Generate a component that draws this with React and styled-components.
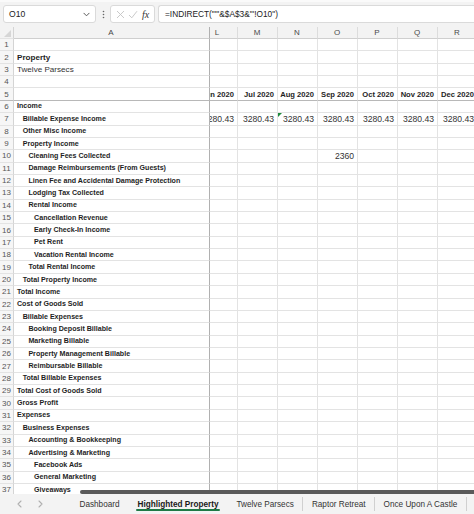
import styled, { createGlobalStyle } from 'styled-components';

const GlobalStyle = createGlobalStyle`
	html, body {
		margin: 0;
		padding: 0;
		overflow: hidden;
		background: #ffffff;
	}
	* {
		box-sizing: border-box;
	}
`;

const ROW_H = 12.36;

const Frame = styled.div`
	width: 474px;
	height: 514px;
	display: flex;
	flex-direction: column;
	font-family: 'Liberation Sans', Arial, sans-serif;
	background: #ffffff;
	overflow: hidden;
`;

const FormulaBar = styled.div`
	height: 26px;
	flex-shrink: 0;
	display: flex;
	align-items: center;
	padding: 0 0 0 3px;
	background: #f3f3f3;
	border-top: 2px solid #fafafa;
`;

const Box = styled.div`
	height: 18px;
	background: #ffffff;
	border: 1px solid #dadada;
	border-radius: 3px;
	display: flex;
	align-items: center;
`;

const NameBox = styled(Box)`
	width: 93px;
	padding: 0 5px 0 5px;
	justify-content: space-between;
	font-size: 8.6px;
	color: #222;
`;

const Dots = styled.div`
	width: 14px;
	display: flex;
	justify-content: center;
	color: #666;
`;

const FuncBox = styled(Box)`
	width: 45px;
	justify-content: space-around;
	padding: 0 3px;
	margin-right: 3px;
`;

const Fx = styled.span`
	font-family: 'Liberation Serif', serif;
	font-style: italic;
	font-size: 10px;
	color: #333;
`;

const FormulaInput = styled(Box)`
	flex: 1;
	border-right: none;
	border-radius: 3px 0 0 3px;
	padding-left: 6px;
	font-size: 8.3px;
	color: #222;
	white-space: pre;
`;

const Gap = styled.div`
	height: 1px;
	background: #f3f3f3;
	flex-shrink: 0;
`;

const Sheet = styled.div`
	flex: 1;
	position: relative;
	overflow: hidden;
`;

const Row = styled.div`
	display: flex;
	height: ${(p) => (p.$head ? '12px' : `${ROW_H}px`)};
	width: 480px;
`;

const RowNum = styled.div`
	width: 14px;
	flex-shrink: 0;
	background: ${(p) => (p.$corner ? '#f3f3f3' : '#f6f6f6')};
	border-bottom: 1px solid ${(p) => (p.$freeze ? '#b8b8b8' : '#e3e3e3')};
	border-right: 1px solid #d4d4d4;
	color: #555;
	font-size: 8px;
	display: flex;
	align-items: center;
	justify-content: center;
	position: relative;
`;

const Corner = styled.div`
	width: 0;
	height: 0;
	border-left: 7px solid transparent;
	border-bottom: 7px solid #d6d6d6;
	position: absolute;
	right: 2px;
	bottom: 1px;
`;

const ColHead = styled.div`
	width: ${(p) => p.$w}px;
	flex-shrink: 0;
	background: #f3f3f3;
	border-right: 1px solid ${(p) => (p.$freeze ? '#b0b0b0' : '#dcdcdc')};
	border-bottom: 1px solid #cfcfcf;
	color: #4a4a4a;
	font-size: 8px;
	display: flex;
	align-items: center;
	justify-content: flex-end;
	overflow: hidden;
`;

const HeadLabel = styled.span`
	width: ${(p) => p.$w}px;
	flex-shrink: 0;
	text-align: center;
`;

const Cell = styled.div`
	width: ${(p) => p.$w}px;
	flex-shrink: 0;
	border-right: ${(p) => (p.$freeze ? '1.5px solid #b0b0b0' : '1px solid #e3e3e3')};
	border-bottom: 1px solid ${(p) => (p.$freeze5 ? '#b8b8b8' : '#e3e3e3')};
	display: flex;
	align-items: center;
	justify-content: ${(p) => (p.$left ? 'flex-start' : 'flex-end')};
	overflow: hidden;
	white-space: nowrap;
	position: relative;
`;

const Label = styled.span`
	padding-left: ${(p) => 3 + p.$level * 5.7}px;
	font-size: ${(p) => (p.$big ? '8.1px' : '7.1px')};
	font-weight: ${(p) => (p.$plain ? 400 : 700)};
	color: ${(p) => (p.$plain ? '#333' : '#1e1e1e')};
`;

const Value = styled.span`
	width: ${(p) => p.$w}px;
	flex-shrink: 0;
	text-align: right;
	padding-right: 3px;
	font-size: ${(p) => (p.$bold ? '7.6px' : '8.6px')};
	font-weight: ${(p) => (p.$bold ? 700 : 400)};
	color: ${(p) => (p.$bold ? '#1e1e1e' : '#333')};
`;

const ErrorMark = styled.div`
	position: absolute;
	left: 0;
	top: 0;
	width: 0;
	height: 0;
	border-top: 4px solid #1e8a3c;
	border-right: 4px solid transparent;
`;

const ScrollThumb = styled.div`
	position: absolute;
	left: 80px;
	right: 0;
	bottom: 0;
	height: 4px;
	background: #5a5a5a;
	border-radius: 2px 0 0 2px;
`;

const TabBar = styled.div`
	height: 20px;
	flex-shrink: 0;
	background: #f3f3f3;
	display: flex;
	align-items: center;
	font-size: 8.2px;
	color: #333;
`;

const Arrow = styled.div`
	width: 20px;
	display: flex;
	justify-content: center;
	color: #b0b0b0;
`;

const Tabs = styled.div`
	display: flex;
	align-items: stretch;
	height: 100%;
	margin-left: 21px;
`;

const Tab = styled.div`
	position: relative;
	display: flex;
	align-items: center;
	padding: 0 8.5px;
	white-space: nowrap;
	font-weight: ${(p) => (p.$active ? 700 : 400)};
	color: ${(p) => (p.$active ? '#1a1a1a' : '#333')};
	border-right: 1px solid ${(p) => (p.$sep ? '#d0d0d0' : 'transparent')};
	margin: 3px 0;

	&::after {
		content: '';
		display: ${(p) => (p.$active ? 'block' : 'none')};
		position: absolute;
		left: 7px;
		right: 7px;
		bottom: 0;
		height: 2px;
		border-radius: 1px;
		background: #1e7a46;
	}
`;

const labels = [
	['', 0],
	['Property', 0, 'big'],
	['Twelve Parsecs', 0, 'plain'],
	['', 0],
	['', 0],
	['Income', 0],
	['Billable Expense Income', 1],
	['Other Misc Income', 1],
	['Property Income', 1],
	['Cleaning Fees Collected', 2],
	['Damage Reimbursements (From Guests)', 2],
	['Linen Fee and Accidental Damage Protection', 2],
	['Lodging Tax Collected', 2],
	['Rental Income', 2],
	['Cancellation Revenue', 3],
	['Early Check-In Income', 3],
	['Pet Rent', 3],
	['Vacation Rental Income', 3],
	['Total Rental Income', 2],
	['Total Property Income', 1],
	['Total Income', 0],
	['Cost of Goods Sold', 0],
	['Billable Expenses', 1],
	['Booking Deposit Billable', 2],
	['Marketing Billable', 2],
	['Property Management Billable', 2],
	['Reimbursable Billable', 2],
	['Total Billable Expenses', 1],
	['Total Cost of Goods Sold', 0],
	['Gross Profit', 0],
	['Expenses', 0],
	['Business Expenses', 1],
	['Accounting & Bookkeeping', 2],
	['Advertising & Marketing', 2],
	['Facebook Ads', 3],
	['General Marketing', 3],
	['Giveaways', 3],
];

const columns = [
	{ key: 'L', w: 28, month: 'Jun 2020' },
	{ key: 'M', w: 40, month: 'Jul 2020' },
	{ key: 'N', w: 40, month: 'Aug 2020' },
	{ key: 'O', w: 40, month: 'Sep 2020' },
	{ key: 'P', w: 40, month: 'Oct 2020' },
	{ key: 'Q', w: 40, month: 'Nov 2020' },
	{ key: 'R', w: 40, month: 'Dec 2020' },
];

const cellValue = (row, col) => {
	if (row === 5) return { text: col.month, bold: true };
	if (row === 7) return { text: '3280.43' };
	if (row === 10 && col.key === 'O') return { text: '2360' };
	return null;
};

const tabs = [
	{ name: 'Dashboard' },
	{ name: 'Highlighted Property', active: true },
	{ name: 'Twelve Parsecs', sep: true },
	{ name: 'Raptor Retreat', sep: true },
	{ name: 'Once Upon A Castle', sep: true },
];

const Chevron = ({ dir = 'down', size = 7, color = '#555' }) => {
	const d = {
		down: 'M1 2.5 L4 5.5 L7 2.5',
		left: 'M5 1 L2 4 L5 7',
		right: 'M3 1 L6 4 L3 7',
	}[dir];
	return (
		<svg width={size} height={size} viewBox='0 0 8 8'>
			<path d={d} fill='none' stroke={color} strokeWidth='1.1' strokeLinecap='round' strokeLinejoin='round' />
		</svg>
	);
};

const App = () => {
	return (
		<Frame>
			<GlobalStyle />
			<FormulaBar>
				<NameBox>
					<span>O10</span>
					<Chevron />
				</NameBox>
				<Dots>
					<svg width='3' height='9' viewBox='0 0 3 9'>
						<circle cx='1.5' cy='1.5' r='0.8' fill='#666' />
						<circle cx='1.5' cy='4.5' r='0.8' fill='#666' />
						<circle cx='1.5' cy='7.5' r='0.8' fill='#666' />
					</svg>
				</Dots>
				<FuncBox>
					<svg width='9' height='9' viewBox='0 0 9 9'>
						<path d='M1 1 L8 8 M8 1 L1 8' stroke='#c4c4c4' strokeWidth='0.9' />
					</svg>
					<svg width='10' height='9' viewBox='0 0 10 9'>
						<path d='M1 5 L3.8 7.8 L9 1.2' fill='none' stroke='#c4c4c4' strokeWidth='0.9' />
					</svg>
					<Fx>fx</Fx>
				</FuncBox>
				<FormulaInput>{`=INDIRECT("'"&$A$3&"'!O10")`}</FormulaInput>
			</FormulaBar>
			<Gap />
			<Sheet>
				<Row $head>
					<RowNum $corner>
						<Corner />
					</RowNum>
					<ColHead $w={196} $freeze>
						<HeadLabel $w={196}>A</HeadLabel>
					</ColHead>
					{columns.map((c) => (
						<ColHead key={c.key} $w={c.w}>
							<HeadLabel $w={40}>{c.key}</HeadLabel>
						</ColHead>
					))}
				</Row>
				{labels.map(([text, level, kind], i) => {
					const row = i + 1;
					return (
						<Row key={row}>
							<RowNum $freeze={row === 5}>{row}</RowNum>
							<Cell $w={196} $left $freeze $freeze5={row === 5}>
								{text && (
									<Label $level={level} $big={kind === 'big' || kind === 'plain'} $plain={kind === 'plain'}>
										{text}
									</Label>
								)}
							</Cell>
							{columns.map((c) => {
								const v = cellValue(row, c);
								return (
									<Cell key={c.key} $w={c.w} $freeze5={row === 5}>
										{row === 7 && c.key === 'N' && <ErrorMark />}
										{v && (
											<Value $w={40} $bold={v.bold}>
												{v.text}
											</Value>
										)}
									</Cell>
								);
							})}
						</Row>
					);
				})}
				<ScrollThumb />
			</Sheet>
			<TabBar>
				<Arrow style={{ marginLeft: 10 }}>
					<Chevron dir='left' size={8} color='#b0b0b0' />
				</Arrow>
				<Arrow>
					<Chevron dir='right' size={8} color='#b0b0b0' />
				</Arrow>
				<Tabs>
					{tabs.map((t) => (
						<Tab key={t.name} $active={t.active} $sep={t.sep}>
							{t.name}
						</Tab>
					))}
				</Tabs>
			</TabBar>
		</Frame>
	);
};

export default App;
